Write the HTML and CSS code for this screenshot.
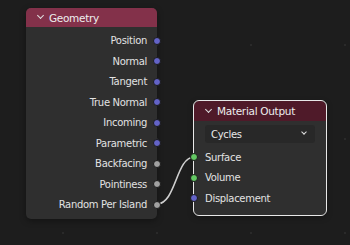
FILE: index.html
```html
<!DOCTYPE html>
<html lang="en">
<head>
    <meta charset="UTF-8">
    <title>Node Editor</title>
    <link rel="stylesheet" href="styles.css">
</head>
<body>
    <div class="canvas">
        <svg class="links" width="350" height="245">
            <path d="M157 204 C176 204 176 157 194 157" fill="none" stroke="#cfcfcf" stroke-width="1.6"/>
        </svg>

        <div class="node node-geometry">
            <div class="node-header geo-header">
                <span class="chevron"></span>
                <span>Geometry</span>
            </div>
            <div class="node-body">
                <div class="row out"><span>Position</span><i class="socket vec"></i></div>
                <div class="row out"><span>Normal</span><i class="socket vec"></i></div>
                <div class="row out"><span>Tangent</span><i class="socket vec"></i></div>
                <div class="row out"><span>True Normal</span><i class="socket vec"></i></div>
                <div class="row out"><span>Incoming</span><i class="socket vec"></i></div>
                <div class="row out"><span>Parametric</span><i class="socket vec"></i></div>
                <div class="row out"><span>Backfacing</span><i class="socket val"></i></div>
                <div class="row out"><span>Pointiness</span><i class="socket val"></i></div>
                <div class="row out"><span>Random Per Island</span><i class="socket val"></i></div>
            </div>
        </div>

        <div class="node node-output selected">
            <div class="node-header out-header">
                <span class="chevron"></span>
                <span>Material Output</span>
            </div>
            <div class="node-body">
                <div class="dropdown">
                    <span>Cycles</span>
                    <span class="chevron small"></span>
                </div>
                <div class="row in"><i class="socket shader"></i><span>Surface</span></div>
                <div class="row in"><i class="socket shader"></i><span>Volume</span></div>
                <div class="row in"><i class="socket vec"></i><span>Displacement</span></div>
            </div>
        </div>
    </div>
</body>
</html>
```

FILE: styles.css
```css
* {
    margin: 0;
    padding: 0;
    box-sizing: border-box;
}

body {
    background: #1d1d1d;
    font-family: "DejaVu Sans", sans-serif;
    font-size: 10px;
    letter-spacing: -0.3px;
    color: #e2e2e2;
    overflow: hidden;
}

.canvas {
    position: relative;
    width: 350px;
    height: 245px;
    background-color: #1d1d1d;
    background-image: radial-gradient(circle, #2a2a2a 1px, transparent 1.5px);
    background-size: 94px 94px;
    background-position: 16px 186px;
}

.links {
    position: absolute;
    left: 0;
    top: 0;
    z-index: 2;
}

.node {
    position: absolute;
    background: #2f2f2f;
    border-radius: 5px;
    box-shadow: 0 2px 6px rgba(0,0,0,0.35);
}

.node-geometry {
    left: 26px;
    top: 8px;
    width: 131px;
    height: 211px;
}

.node-output {
    left: 194px;
    top: 101px;
    width: 132px;
    height: 114px;
}

.node-output.selected {
    outline: 1px solid #e8e8e8;
    outline-offset: 0;
}

.node-header {
    height: 19px;
    display: flex;
    align-items: center;
    gap: 6px;
    padding-left: 12px;
    border-radius: 5px 5px 0 0;
    color: #ededed;
    font-size: 10.5px;
}

.geo-header {
    background: #83314a;
}

.out-header {
    height: 20px;
    background: #4f1a29;
}

.chevron {
    width: 5px;
    height: 5px;
    border-right: 1.5px solid #e0e0e0;
    border-bottom: 1.5px solid #e0e0e0;
    transform: translateY(-2px) rotate(45deg);
}

.chevron.small {
    width: 4px;
    height: 4px;
    border-width: 1.3px;
}

.node-geometry .node-body {
    padding-top: 3.5px;
}

.row {
    height: 20.5px;
    display: flex;
    align-items: center;
    position: relative;
}

.row.out {
    justify-content: flex-end;
    padding-right: 10px;
}

.row.in {
    padding-left: 11px;
}

.socket {
    position: absolute;
    top: 50%;
    width: 8px;
    height: 8px;
    margin-top: -4px;
    border-radius: 50%;
    border: 1px solid #1a1a1a;
    z-index: 3;
}

.row.out .socket {
    right: -4px;
}

.row.in .socket {
    left: -4px;
}

.socket.vec {
    background: #6363c7;
}

.socket.val {
    background: #a1a1a1;
}

.socket.shader {
    background: #63c763;
}

.dropdown {
    margin: 4px 11px 4px 11px;
    height: 18px;
    background: #282828;
    border-radius: 3px;
    display: flex;
    align-items: center;
    justify-content: space-between;
    padding: 0 9px 0 6px;
    color: #e8e8e8;
}
```
